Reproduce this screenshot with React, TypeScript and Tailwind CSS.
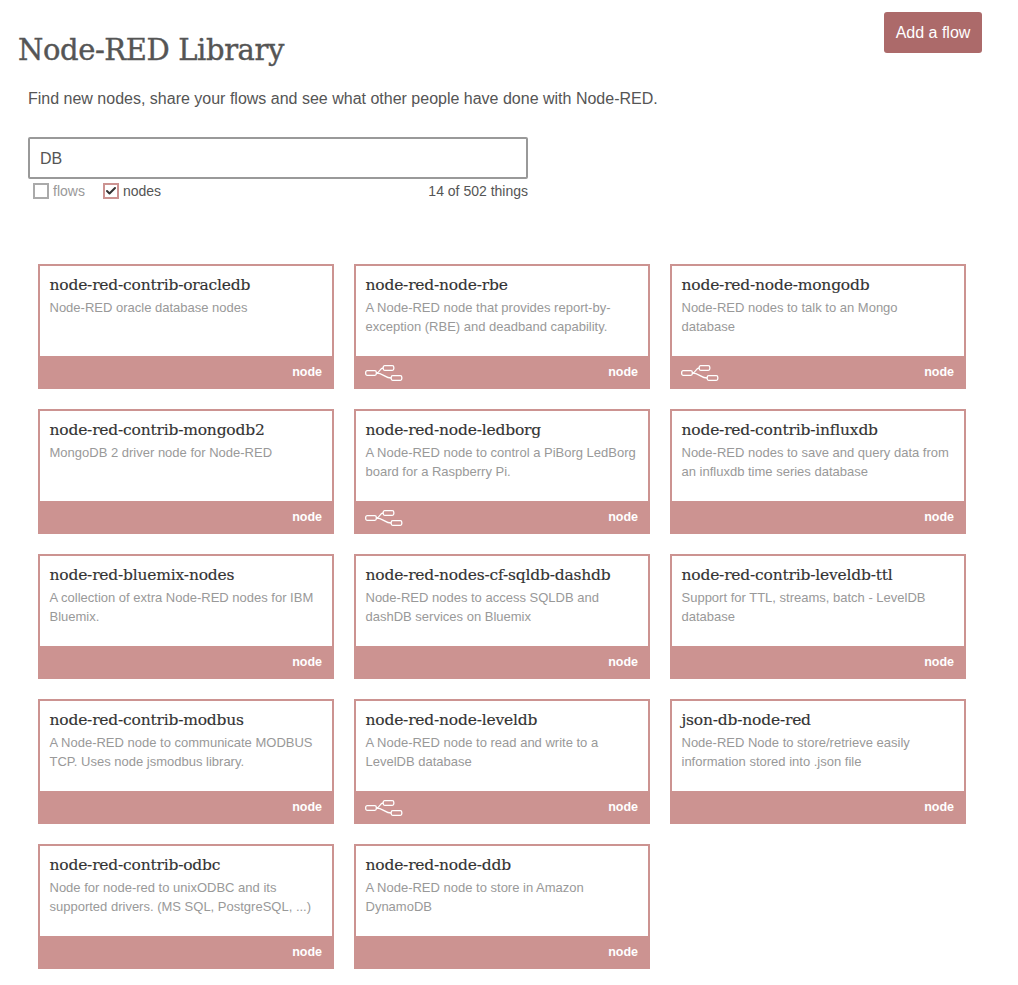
import React from 'react';
import { Check } from 'lucide-react';

type Thing = { name: string; lines: string[]; flow?: boolean };

const things: Thing[] = [
  { name: 'node-red-contrib-oracledb', lines: ['Node-RED oracle database nodes'] },
  { name: 'node-red-node-rbe', lines: ['A Node-RED node that provides report-by-', 'exception (RBE) and deadband capability.'], flow: true },
  { name: 'node-red-node-mongodb', lines: ['Node-RED nodes to talk to an Mongo', 'database'], flow: true },
  { name: 'node-red-contrib-mongodb2', lines: ['MongoDB 2 driver node for Node-RED'] },
  { name: 'node-red-node-ledborg', lines: ['A Node-RED node to control a PiBorg LedBorg', 'board for a Raspberry Pi.'], flow: true },
  { name: 'node-red-contrib-influxdb', lines: ['Node-RED nodes to save and query data from', 'an influxdb time series database'] },
  { name: 'node-red-bluemix-nodes', lines: ['A collection of extra Node-RED nodes for IBM', 'Bluemix.'] },
  { name: 'node-red-nodes-cf-sqldb-dashdb', lines: ['Node-RED nodes to access SQLDB and', 'dashDB services on Bluemix'] },
  { name: 'node-red-contrib-leveldb-ttl', lines: ['Support for TTL, streams, batch - LevelDB', 'database'] },
  { name: 'node-red-contrib-modbus', lines: ['A Node-RED node to communicate MODBUS', 'TCP. Uses node jsmodbus library.'] },
  { name: 'node-red-node-leveldb', lines: ['A Node-RED node to read and write to a', 'LevelDB database'], flow: true },
  { name: 'json-db-node-red', lines: ['Node-RED Node to store/retrieve easily', 'information stored into .json file'] },
  { name: 'node-red-contrib-odbc', lines: ['Node for node-red to unixODBC and its', 'supported drivers. (MS SQL, PostgreSQL, ...)'] },
  { name: 'node-red-node-ddb', lines: ['A Node-RED node to store in Amazon', 'DynamoDB'] },
];

const FlowIcon = () => (
  <svg width="38" height="16" viewBox="0 0 38 16" fill="none" stroke="#fff" strokeWidth="1.3" className="block">
    <rect x="0.7" y="5.7" width="10.6" height="4.6" rx="1.5" />
    <rect x="18.2" y="0.7" width="10.6" height="4.6" rx="1.5" />
    <rect x="26.2" y="10.7" width="10.6" height="4.6" rx="1.5" />
    <path d="M11.3 8 C 15 8, 14.5 3, 18.2 3" />
    <path d="M11.3 8 C 18 8, 20 13, 26.2 13" />
  </svg>
);

const Card = ({ thing }: { thing: Thing }) => (
  <div className="flex h-[125px] flex-col border-2 border-[#cc9391] bg-white">
    <div className="flex-1 pl-[9.5px] pr-[10px] pt-[9px]">
      <div className="font-['DejaVu_Serif',serif] text-[15.5px] leading-[20px] tracking-[-0.2px] text-[#333] [-webkit-text-stroke:0.15px_#333]">{thing.name}</div>
      <div className="mt-[3px] whitespace-nowrap text-[13px] leading-[19px] text-[#999]">
        {thing.lines.map((l) => (
          <div key={l}>{l}</div>
        ))}
      </div>
    </div>
    <div className="-mx-[2px] -mb-[2px] flex h-[33px] items-center justify-between bg-[#cc9391] pl-[11px] pr-[12px]">
      {thing.flow ? <FlowIcon /> : <span />}
      <span className="text-[12.5px] font-bold text-white">node</span>
    </div>
  </div>
);

export default function App() {
  return (
    <div className="min-h-[985px] bg-white font-['Liberation_Sans',sans-serif] text-[#555]">
      <div className="flex items-start justify-between pl-[18px] pr-[36px] pt-[12px]">
        <h1 className="mt-[19px] font-['DejaVu_Serif',serif] text-[29px] leading-[38px] tracking-[-0.4px] text-[#555] [-webkit-text-stroke:0.4px_#555]">Node-RED Library</h1>
        <button className="h-[41px] w-[98px] rounded-[3px] bg-[#ac6a6a] text-[16px] text-white">Add a flow</button>
      </div>
      <p className="ml-[28px] mt-[19px] text-[16px] leading-[22px]">Find new nodes, share your flows and see what other people have done with Node-RED.</p>
      <div className="ml-[28px] mt-[27px] w-[500px]">
        <div className="flex h-[42px] items-center rounded-[2px] border-2 border-[#999] pl-[10px] pt-[1px] text-[16px] text-[#555]">DB</div>
        <div className="mt-[2px] flex h-[20px] items-center text-[14px]">
          <span className="ml-[5px] h-[16px] w-[16px] border-2 border-[#aaa]" />
          <span className="ml-[4px] text-[#999]">flows</span>
          <span className="ml-[18px] flex h-[16px] w-[16px] items-center justify-center border-2 border-[#cc9391]">
            <Check size={12} strokeWidth={4} color="#333" />
          </span>
          <span className="ml-[4px]">nodes</span>
          <span className="ml-auto">14 of 502 things</span>
        </div>
      </div>
      <div className="ml-[38px] mt-[63px] grid w-[928px] grid-cols-[296px_296px_296px] gap-x-[20px] gap-y-[20px]">
        {things.map((t) => (
          <Card key={t.name} thing={t} />
        ))}
      </div>
    </div>
  );
}
